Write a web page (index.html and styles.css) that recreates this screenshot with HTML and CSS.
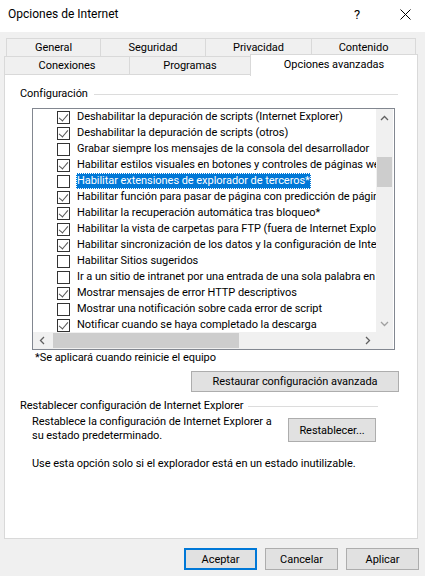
FILE: index.html
```html
<!DOCTYPE html>
<html lang="es">
<head>
<meta charset="utf-8">
<title>Opciones de Internet</title>
<link rel="stylesheet" href="styles.css">
</head>
<body>
<div class="window">
  <div class="titlebar">
    <span class="title">Opciones de Internet</span>
    <span class="help">?</span>
    <span class="close">
      <svg width="11" height="11" viewBox="0 0 11 11"><path d="M0.5 0.5 L10.5 10.5 M10.5 0.5 L0.5 10.5" stroke="#000" stroke-width="1" fill="none"/></svg>
    </span>
  </div>

  <div class="dialog">
    <div class="tabs">
      <div class="tabrow row-back">
        <div class="tab t-general">General</div>
        <div class="tab t-seguridad">Seguridad</div>
        <div class="tab t-privacidad">Privacidad</div>
        <div class="tab t-contenido">Contenido</div>
      </div>
      <div class="tabrow row-front">
        <div class="tab t-conexiones">Conexiones</div>
        <div class="tab t-programas">Programas</div>
        <div class="tab t-avanzadas selected">Opciones avanzadas</div>
      </div>
    </div>

    <div class="panel">
      <div class="group-head">
        <span class="group-label">Configuración</span>
        <span class="group-line"></span>
      </div>

      <div class="listbox">
        <div class="list-items">
          <div class="item"><span class="cb on"></span><span class="label">Deshabilitar la depuración de scripts (Internet Explorer)</span></div>
          <div class="item"><span class="cb on"></span><span class="label">Deshabilitar la depuración de scripts (otros)</span></div>
          <div class="item"><span class="cb"></span><span class="label">Grabar siempre los mensajes de la consola del desarrollador</span></div>
          <div class="item"><span class="cb on"></span><span class="label">Habilitar estilos visuales en botones y controles de páginas web</span></div>
          <div class="item current"><span class="cb"></span><span class="label">Habilitar extensiones de explorador de terceros*</span></div>
          <div class="item"><span class="cb on"></span><span class="label">Habilitar función para pasar de página con predicción de página</span></div>
          <div class="item"><span class="cb on"></span><span class="label">Habilitar la recuperación automática tras bloqueo*</span></div>
          <div class="item"><span class="cb on"></span><span class="label">Habilitar la vista de carpetas para FTP (fuera de Internet Explorer)</span></div>
          <div class="item"><span class="cb on"></span><span class="label">Habilitar sincronización de los datos y la configuración de Internet Explorer</span></div>
          <div class="item"><span class="cb"></span><span class="label">Habilitar Sitios sugeridos</span></div>
          <div class="item"><span class="cb"></span><span class="label">Ir a un sitio de intranet por una entrada de una sola palabra en la barra de direcciones</span></div>
          <div class="item"><span class="cb on"></span><span class="label">Mostrar mensajes de error HTTP descriptivos</span></div>
          <div class="item"><span class="cb"></span><span class="label">Mostrar una notificación sobre cada error de script</span></div>
          <div class="item"><span class="cb on"></span><span class="label">Notificar cuando se haya completado la descarga</span></div>
        </div>

        <div class="vscroll">
          <span class="arrow">
            <svg width="9" height="6" viewBox="0 0 9 6"><path d="M1 5 L4.5 1.5 L8 5" stroke="#606060" stroke-width="1.3" fill="none"/></svg>
          </span>
          <div class="vtrack"><div class="vthumb"></div></div>
          <span class="arrow">
            <svg width="9" height="6" viewBox="0 0 9 6"><path d="M1 1 L4.5 4.5 L8 1" stroke="#a0a0a0" stroke-width="1.3" fill="none"/></svg>
          </span>
        </div>

        <div class="hscroll">
          <span class="arrow">
            <svg width="6" height="9" viewBox="0 0 6 9"><path d="M5 1 L1.5 4.5 L5 8" stroke="#606060" stroke-width="1.3" fill="none"/></svg>
          </span>
          <div class="htrack"><div class="hthumb"></div></div>
          <span class="arrow">
            <svg width="6" height="9" viewBox="0 0 6 9"><path d="M1 1 L4.5 4.5 L1 8" stroke="#606060" stroke-width="1.3" fill="none"/></svg>
          </span>
        </div>

        <div class="corner"></div>
      </div>

      <div class="note">*Se aplicará cuando reinicie el equipo</div>

      <div class="btn btn-restore">Restaurar configuración avanzada</div>

      <div class="group-head group-reset">
        <span class="group-label">Restablecer configuración de Internet Explorer</span>
        <span class="group-line"></span>
      </div>

      <div class="reset-row">
        <div class="reset-text">Restablece la configuración de Internet Explorer a<br>su estado predeterminado.</div>
        <div class="btn btn-reset">Restablecer...</div>
      </div>

      <div class="reset-hint">Use esta opción solo si el explorador está en un estado inutilizable.</div>
    </div>

    <div class="actions">
      <div class="btn btn-action default">Aceptar</div>
      <div class="btn btn-action">Cancelar</div>
      <div class="btn btn-action">Aplicar</div>
    </div>
  </div>
</div>
</body>
</html>
```

FILE: styles.css
```css
* {
  box-sizing: border-box;
}

html, body {
  margin: 0;
  padding: 0;
}

body {
  width: 425px;
  height: 576px;
  overflow: hidden;
  background: #f0f0f0;
  font-family: Roboto, "Noto Sans", "Liberation Sans", sans-serif;
  font-size: 11px;
  letter-spacing: -0.05px;
  color: #000;
}

.window {
  width: 425px;
  height: 576px;
}

/* title bar */
.titlebar {
  height: 32px;
  background: #fff;
  display: flex;
  align-items: center;
  padding-left: 8px;
}

.title {
  font-size: 12px;
  letter-spacing: 0;
  flex: 1;
  margin-top: -4px;
}

.help {
  font-size: 13px;
  width: 12px;
  margin-right: 34px;
  margin-top: -4px;
}

.close {
  display: flex;
  width: 11px;
  margin-right: 14px;
  margin-top: -4px;
}

/* dialog body */
.dialog {
  padding-top: 6px;
}

.tabs {
  display: flex;
  flex-direction: column;
}

.tabrow {
  display: flex;
  height: 18px;
}

.row-back {
  padding-left: 6px;
}

.row-front {
  padding-left: 4px;
  position: relative;
  z-index: 1;
}

.tab {
  height: 19px;
  background: #f0f0f0;
  border: 1px solid #d9d9d9;
  border-right: none;
  display: flex;
  align-items: center;
  justify-content: center;
  line-height: 16px;
  padding-top: 1px;
  white-space: nowrap;
}

.tab:last-child {
  border-right: 1px solid #d9d9d9;
}

.t-general { width: 94px; }
.t-seguridad { width: 105px; }
.t-privacidad { width: 106px; }
.t-contenido { width: 105px; }
.t-conexiones { width: 125px; }
.t-programas { width: 121px; }

.t-avanzadas {
  width: 168px;
}

.tab.selected {
  background: #fff;
  height: 22px;
  margin-top: -2px;
  border-bottom: none;
  align-items: flex-start;
  padding-top: 2px;
}

/* page panel */
.panel {
  margin-left: 4px;
  width: 414px;
  height: 465px;
  background: #fff;
  border: 1px solid #d9d9d9;
  margin-top: 0;
}

.group-head {
  display: flex;
  align-items: center;
  margin-left: 15px;
  margin-right: 19px;
  margin-top: 11px;
  height: 16px;
}

.group-label {
  white-space: nowrap;
  line-height: 16px;
}

.group-line {
  flex: 1;
  height: 1px;
  background: #dcdcdc;
  margin-left: 6px;
}

/* list box with check items */
.listbox {
  margin-top: 6px;
  margin-left: 27px;
  width: 363px;
  height: 242px;
  border: 1px solid #828790;
  display: grid;
  grid-template-columns: 343px 17px;
  grid-template-rows: 223px 17px;
}

.list-items {
  overflow: hidden;
  padding-top: 0;
}

.item {
  height: 16px;
  display: flex;
  align-items: center;
  white-space: nowrap;
}

.cb {
  flex: none;
  width: 13px;
  height: 13px;
  border: 1px solid #333;
  margin-left: 24px;
  margin-right: 6px;
  position: relative;
  background: #fff;
}

.cb.on::after {
  content: "";
  position: absolute;
  left: 3px;
  top: 0px;
  width: 4px;
  height: 8px;
  border-right: 1.3px solid #555;
  border-bottom: 1.3px solid #555;
  transform: rotate(40deg);
}

.label {
  line-height: 16px;
  padding: 0 1px;
}

.item.current .label {
  background: #0078d7;
  color: #fff;
  outline: 1px dotted #fff;
  outline-offset: -1px;
  height: 16px;
}

.vscroll {
  grid-column: 2;
  grid-row: 1;
  background: #f0f0f0;
  display: flex;
  flex-direction: column;
}

.vscroll .arrow {
  height: 17px;
  display: flex;
  align-items: center;
  justify-content: center;
  flex: none;
}

.vtrack {
  flex: 1;
  padding: 0 1px;
}

.vthumb {
  margin-top: 31px;
  height: 30px;
  background: #cdcdcd;
}

.hscroll {
  grid-column: 1;
  grid-row: 2;
  background: #f0f0f0;
  display: flex;
}

.hscroll .arrow {
  width: 17px;
  display: flex;
  align-items: center;
  justify-content: center;
  flex: none;
}

.htrack {
  flex: 1;
  padding: 1px 0;
}

.hthumb {
  margin-left: 3px;
  width: 186px;
  height: 100%;
  background: #cdcdcd;
}

.corner {
  grid-column: 2;
  grid-row: 2;
  background: #f0f0f0;
}

.note {
  margin-left: 30px;
  line-height: 16px;
}

/* push buttons */
.btn {
  background: #e1e1e1;
  border: 1px solid #adadad;
  display: flex;
  align-items: center;
  justify-content: center;
  white-space: nowrap;
}

.btn-restore {
  margin-top: 5px;
  margin-left: 186px;
  width: 208px;
  height: 21px;
}

.group-reset {
  margin-top: 6px;
  margin-right: 39px;
}

.group-reset .group-line {
  margin-left: 5px;
}

.reset-row {
  display: flex;
  align-items: flex-start;
}

.reset-text {
  margin-left: 27px;
  margin-top: 1px;
  width: 256px;
  line-height: 14px;
  white-space: nowrap;
}

.btn-reset {
  margin-top: 4px;
  width: 88px;
  height: 24px;
}

.reset-hint {
  margin-left: 27px;
  margin-top: 14px;
  line-height: 14px;
}

/* dialog buttons */
.actions {
  display: flex;
  justify-content: flex-end;
  gap: 8px;
  padding-right: 6px;
  margin-top: 9px;
}

.btn-action {
  width: 73px;
  height: 22px;
}

.btn-action.default {
  border: 2px solid #0078d7;
}
```
